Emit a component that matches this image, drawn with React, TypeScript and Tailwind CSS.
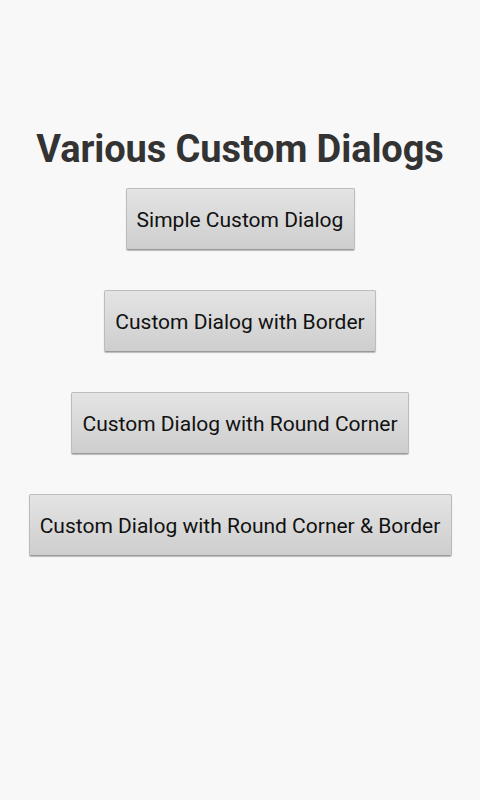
const BUTTONS = [
  { label: "Simple Custom Dialog", width: "w-[229px]" },
  { label: "Custom Dialog with Border", width: "w-[272px]" },
  { label: "Custom Dialog with Round Corner", width: "w-[338px]" },
  { label: "Custom Dialog with Round Corner & Border", width: "w-[423px]" },
];

export default function App() {
  return (
    <div className="min-h-[800px] bg-[#f8f8f8] font-['Roboto',sans-serif] flex flex-col items-center pt-[124px]">
      <h1 className="text-[38px] leading-[50px] font-bold text-[#333333] tracking-[-0.1px]">
        Various Custom Dialogs
      </h1>
      <div className="flex flex-col items-center gap-[40px] mt-[14px]">
        {BUTTONS.map((b) => (
          <button
            key={b.label}
            className={`${b.width} h-[62px] pt-[3px] rounded-[2px] border border-[#bcbcbc] border-b-[#9a9a9a] bg-gradient-to-b from-[#e4e4e4] to-[#cecece] shadow-[0_1px_1px_rgba(0,0,0,0.25)] text-[21px] text-[#111111] whitespace-nowrap`}
          >
            {b.label}
          </button>
        ))}
      </div>
    </div>
  );
}
